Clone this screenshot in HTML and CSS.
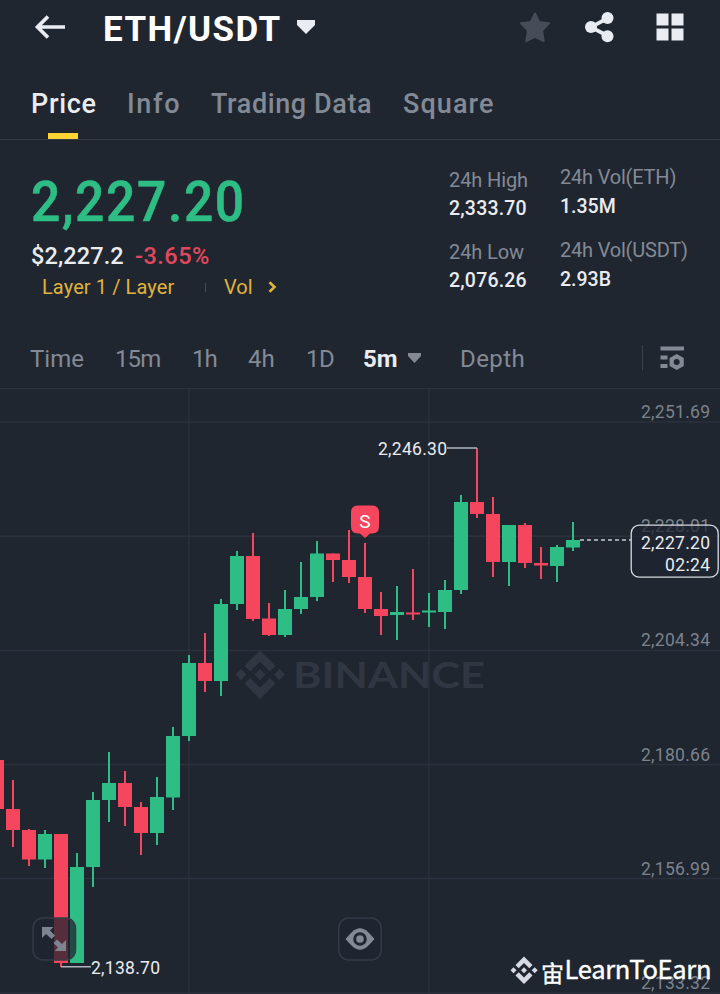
FILE: index.html
```html
<!DOCTYPE html>
<html lang="en">
<head>
<meta charset="utf-8">
<title>ETH/USDT</title>
<link rel="stylesheet" href="styles.css">
</head>
<body>
<div class="app">
  <header class="header">
    <svg class="back" width="32" height="26" viewBox="0 0 32 26"><path d="M31 13H3M14 2.500 3.500 13 14 23.500" fill="none" stroke="#e9ecf2" stroke-width="3.700"/></svg>
    <h1 class="pair">ETH/USDT</h1>
    <svg class="pair-caret" width="18" height="14" viewBox="0 0 18 14"><path d="M0 0H18V5L9 14 0 5Z" fill="#e9ecf2"/></svg>
    <div class="actions">
      <svg width="32" height="32" viewBox="0 0 32 32"><path d="M16 2.500 20.200 11 30 12.300 23 19.500 24.700 30 16 25.800 7.300 30 9 19.500 2 12.300 11.800 11Z" fill="#474d58" stroke="#474d58" stroke-width="2" stroke-linejoin="round"/></svg>
      <svg width="30" height="32" viewBox="0 0 30 32"><path d="M24 7 7 16.200 24 25" fill="none" stroke="#e9ecf2" stroke-width="3.700"/><circle cx="23.500" cy="7" r="6" fill="#e9ecf2"/><circle cx="7" cy="16" r="6" fill="#e9ecf2"/><circle cx="23.500" cy="25.200" r="6" fill="#e9ecf2"/></svg>
      <svg width="28" height="28" viewBox="0 0 28 28"><path d="M.5.500h12v12H.5zM15.500.500h12v12h-12zM.5 15.500h12v12H.5zM15.500 15.500h12v12h-12z" fill="#e9ecf2"/></svg>
    </div>
  </header>

  <nav class="tabs">
    <span class="tab tab-active">Price</span>
    <span class="tab tab-info">Info</span>
    <span class="tab tab-data">Trading Data</span>
    <span class="tab tab-square">Square</span>
  </nav>

  <section class="summary">
    <div class="quote">
      <div class="last">2,227.20</div>
      <div class="fiat"><span class="usd">$2,227.2</span><span class="change">-3.65%</span></div>
      <div class="tags">
        <span class="tag-layer">Layer 1 / Layer</span><i class="tag-divider"></i><span class="tag-vol">Vol</span>
        <svg width="9" height="12" viewBox="0 0 9 12"><path d="M1.500 1.200 6.500 6 1.500 10.800" fill="none" stroke="#e0b43c" stroke-width="2.600"/></svg>
      </div>
    </div>
    <dl class="stats stats-range">
      <dt class="l-high">24h High</dt><dd>2,333.70</dd>
      <dt class="l-low">24h Low</dt><dd>2,076.26</dd>
    </dl>
    <dl class="stats stats-volume">
      <dt class="l-eth">24h Vol(ETH)</dt><dd>1.35M</dd>
      <dt class="l-usdt">24h Vol(USDT)</dt><dd>2.93B</dd>
    </dl>
  </section>

  <nav class="intervals">
    <span class="i-time">Time</span>
    <span class="i-15m">15m</span>
    <span class="i-1h">1h</span>
    <span class="i-4h">4h</span>
    <span class="i-1d">1D</span>
    <span class="i-5m">5m</span>
    <svg class="i-caret" width="13" height="10" viewBox="0 0 13 10"><path d="M0 0H13V3L6.500 10 0 3Z" fill="#848a95"/></svg>
    <span class="i-depth">Depth</span>
    <i class="i-divider"></i>
    <svg class="i-settings" width="25" height="25" viewBox="0 0 25 25"><path d="M.5.500h23.500v4H.5zM.5 9.500h7v4h-7zM.5 18h7v4h-7z" fill="#848a95"/><path d="M16.700 8 23.800 12v8l-7.100 4-7.100-4v-8Z" fill="#848a95"/><circle cx="16.700" cy="16" r="3" fill="#1f2630"/></svg>
  </nav>

  <svg class="chart" width="720" height="606" viewBox="0 388 720 606">
    <path class="grid" d="M0 388.500H720M0 422H720M0 536.300H720M0 650.500H720M0 764.500H720M0 878.500H720M0 993H720M189 388V994M429 388V994"/>

    <g class="watermark">
      <path d="M260 650.500 275.500 666 269.800 671.500 260 661.700 250.200 671.500 244.500 666ZM260 699 275.500 683.500 269.800 678 260 687.800 250.200 678 244.500 683.500ZM260 669 265.500 674.600 260 680.200 254.500 674.600ZM241 669 246.500 674.600 241 680.200 235.500 674.600ZM279.500 669 285 674.600 279.500 680.200 274 674.600Z"/>
      <text x="293" y="687.500" textLength="192" lengthAdjust="spacingAndGlyphs">BINANCE</text>
    </g>

    <g class="axis">
      <text x="641" y="418" textLength="69">2,251.69</text>
      <text x="641" y="532" textLength="69">2,228.01</text>
      <text x="641" y="646" textLength="69">2,204.34</text>
      <text x="641" y="761" textLength="69">2,180.66</text>
      <text x="641" y="875" textLength="69">2,156.99</text>
      <text x="641" y="989" textLength="69">2,133.32</text>
    </g>

    <g id="candles"></g>

    <path class="leader" d="M447 448H477M61 966.800H91"/>
    <g class="extreme">
      <text x="378" y="455" textLength="69">2,246.30</text>
      <text x="91" y="974" textLength="69">2,138.70</text>
    </g>

    <path d="M358 505.500H372Q379 505.500 379 512.500V526.500Q379 533.500 372 533.500H370L365 538 360 533.500H358Q351 533.500 351 526.500V512.500Q351 505.500 358 505.500Z" fill="#f6465d"/>
    <text class="sell" x="365" y="527.500" text-anchor="middle">S</text>

    <path class="last-line" d="M580 540H631"/>
    <rect x="631.200" y="525.200" width="87" height="52" rx="8" fill="#1f2630" fill-opacity=".72" stroke="#d5d9e0" stroke-width="1.300"/>
    <g class="extreme">
      <text x="641" y="549" textLength="69">2,227.20</text>
      <text x="665" y="571" textLength="45">02:24</text>
    </g>

    <rect class="tool" x="33" y="918" width="42.500" height="42" rx="10"/>
    <path d="M42 927H53.500L50 930.500 55 935.500 51.500 939 46 934 42 938ZM66 951H54.500L58 947.500 53.500 943 57 939.500 62 944 66 940Z" fill="#7d8490"/>
    <rect class="tool" x="338.700" y="918" width="42.500" height="42" rx="10"/>
    <path d="M345.500 939Q348 936 352 932Q360 924.500 368 932Q372 936 374.500 939Q372 942 368 946Q360 953.500 352 946Q348 942 345.500 939Z" fill="#848a95"/>
    <circle cx="360" cy="939" r="5.300" fill="#848a95" stroke="#1f2630" stroke-width="3"/>

    <g class="credit">
      <path d="M524 956.500 532.500 965 529.300 968.200 524 963 518.700 968.200 515.500 965ZM524 984 532.500 975.500 529.300 972.300 524 977.500 518.700 972.300 515.500 975.500ZM524 967.200 527 970.200 524 973.200 521 970.200ZM513.500 967.200 516.500 970.200 513.500 973.200 510.500 970.200ZM534.700 967.200 537.700 970.200 534.700 973.200 531.700 970.200Z" fill="#d7dae4"/>
      <text x="541" y="981.500" font-size="23">宙</text>
      <text x="564.500" y="979" textLength="147">LearnToEarn</text>
    </g>
  </svg>
</div>
<script src="chart.js"></script>
</body>
</html>
```
FILE: styles.css
```css
* { box-sizing: border-box; }
body { margin: 0; background: #1f2630; }
.app {
  width: 720px; height: 994px; overflow: hidden;
  background: #1f2630; color: #eaecef;
  font-family: Roboto, "Liberation Sans", sans-serif;
}
svg { display: block; flex: none; }
span { white-space: nowrap; }

.header { display: flex; align-items: center; height: 55px; padding: 0 36px 0 34px; }
.back { margin-bottom: 2px; }
.pair { margin: 4px 0 0 37px; width: 178px; font-size: 35px; line-height: 40px; font-weight: 700; letter-spacing: 1.4px; color: #fff; }
.pair-caret { margin: 0 0 1px 16px; }
.actions { display: flex; align-items: center; margin: -2px 0 0 auto; gap: 34px; }
.actions svg:nth-child(2) { margin-left: -1px; }
.actions svg:last-child { margin-left: 8px; }

.tabs { display: flex; height: 85px; padding: 32px 0 0 31px; border-bottom: 1px solid #343b46; font-size: 27px; line-height: 34px; font-weight: 500; color: #848a95; }
.tab { flex: none; }
.tab-active { position: relative; width: 96px; color: #eaecef; letter-spacing: .7px; }
.tab-active::after { content: ""; position: absolute; left: 17px; top: 46px; width: 30px; height: 6px; background: #fcd535; }
.tab-info { width: 84px; letter-spacing: 1.7px; }
.tab-data { width: 192px; letter-spacing: .6px; }
.tab-square { letter-spacing: 1.1px; }

.summary { display: flex; height: 190px; }
.quote { width: 449px; padding: 29px 0 0 31px; }
.last { width: 230px; font-size: 56px; line-height: 66px; font-weight: 500; letter-spacing: 1.8px; color: #2ebd85; -webkit-text-stroke: .6px #2ebd85; transform: scaleX(.92); transform-origin: 0 50%; }
.fiat { display: flex; margin-top: 7px; font-size: 23.500px; line-height: 28px; font-weight: 500; }
.usd { width: 104px; letter-spacing: .1px; }
.change { color: #e0485e; letter-spacing: .5px; }
.tags { display: flex; align-items: center; height: 34px; padding-left: 11px; font-size: 20px; color: #e0b43c; }
.tag-layer { width: 163px; letter-spacing: .1px; }
.tag-divider { width: 1px; height: 9px; margin-right: 18px; background: #474d58; }
.tag-vol { width: 44px; }
.stats { margin: 0; font-size: 20px; line-height: 28px; }
.stats dt { color: #848a95; font-weight: 400; letter-spacing: -.1px; }
.stats dd { position: relative; top: 1px; margin: 0 0 16px; color: #eaecef; font-weight: 500; font-size: 19.500px; letter-spacing: .2px; }
.stats-range { width: 111px; padding-top: 26px; }
.stats-volume { padding-top: 23px; }
.stats-volume dt { letter-spacing: -.2px; }
.stats-volume dd { top: 2px; margin-bottom: 17px; letter-spacing: 0; }

.intervals { display: flex; align-items: center; height: 58px; padding-left: 30px; font-size: 24px; color: #848a95; }
.i-time { width: 85px; }
.i-15m { width: 77px; letter-spacing: -.9px; }
.i-1h { width: 56px; letter-spacing: -.9px; }
.i-4h { width: 58px; }
.i-1d { width: 57px; letter-spacing: -.6px; }
.i-5m { width: 45px; color: #eaecef; font-weight: 700; }
.i-caret { margin-bottom: 3px; }
.i-depth { margin-left: 39px; width: 182px; letter-spacing: .4px; }
.i-divider { width: 1px; height: 25px; margin: 0 17px 3px 0; background: #3b424d; }
.i-settings { margin-bottom: 2px; }

.grid { stroke: #2b323d; stroke-width: 1.500; fill: none; }
.watermark { fill: #303742; }
.watermark text { font: 700 36px Lato, sans-serif; }
.axis { font-size: 17.500px; fill: #7c828d; }
.extreme { font-size: 17.500px; fill: #eaecef; }
.leader { stroke: #b0b5be; stroke-width: 1.500; fill: none; }
.last-line { stroke: #c5c9d1; stroke-width: 1.500; stroke-dasharray: 4 3; }
.sell { font-size: 19px; fill: #fff; }
.tool { fill: #1f2630; fill-opacity: .75; stroke: #343b46; stroke-width: 1.500; }
.credit text { font-family: "Noto Sans CJK SC", "Noto Sans", sans-serif; fill: #fff; stroke: #fff; stroke-width: .4; }
.credit text:last-child { font-size: 25.500px; }
.up { fill: #2ebd85; }
.down { fill: #f6465d; }
```
FILE: chart.js
```js
// Each row: centre x, body top, body bottom, wick top, wick bottom, direction.
const candles = [
  [-3, 760, 809, 760, 809, 'down'], [13, 809, 830, 780, 847, 'down'],
  [29, 830, 859.5, 829, 866, 'down'], [45, 834, 859.5, 830, 868, 'up'],
  [61, 834, 963, 834, 967, 'down'], [77, 867, 963, 853, 963, 'up'],
  [93, 800, 867, 792, 887, 'up'], [109, 783, 800, 752, 822, 'up'],
  [125, 783, 807, 771, 826, 'down'], [141, 807, 833, 802, 855, 'down'],
  [157, 797, 833, 777, 845, 'up'], [173, 736, 797.5, 727, 810, 'up'],
  [189, 663, 736, 655, 741, 'up'], [205, 663, 681, 633, 692, 'down'],
  [221, 604, 681, 599, 696, 'up'], [237, 556, 604, 551, 610, 'up'],
  [253, 556, 619, 533, 621, 'down'], [269, 618.5, 635, 603, 636, 'down'],
  [285, 609, 635, 590, 637, 'up'], [301, 597, 609, 562, 614, 'up'],
  [317, 553.5, 597, 541, 601, 'up'], [333, 553.5, 560, 553.5, 582, 'down'],
  [349, 560, 577, 530, 583, 'down'], [365, 577, 609, 543, 613, 'down'],
  [381, 609, 616, 592, 635, 'down'], [397, 612, 615, 586, 640, 'up'],
  [413, 612.5, 614.5, 569, 620, 'down'], [429, 610.5, 612.5, 593, 627, 'up'],
  [445, 590, 612, 580, 629, 'up'], [461, 502, 590, 495, 594, 'up'],
  [477, 502, 514, 448, 518, 'down'], [493, 514, 562, 497, 577, 'down'],
  [509, 525, 562, 525, 586, 'up'], [525, 525, 563, 523, 568, 'down'],
  [541, 563, 565.5, 547, 579, 'down'], [557, 547, 566, 545, 582, 'up'],
  [573, 540, 547.5, 522, 551, 'up']
];
document.getElementById('candles').innerHTML = candles.map(([x, top, bottom, high, low, dir]) =>
  `<g class="${dir}"><rect x="${x - 7}" y="${top}" width="14" height="${bottom - top}"/>` +
  `<rect x="${x - 1}" y="${high}" width="2" height="${low - high}"/></g>`).join('');
```
